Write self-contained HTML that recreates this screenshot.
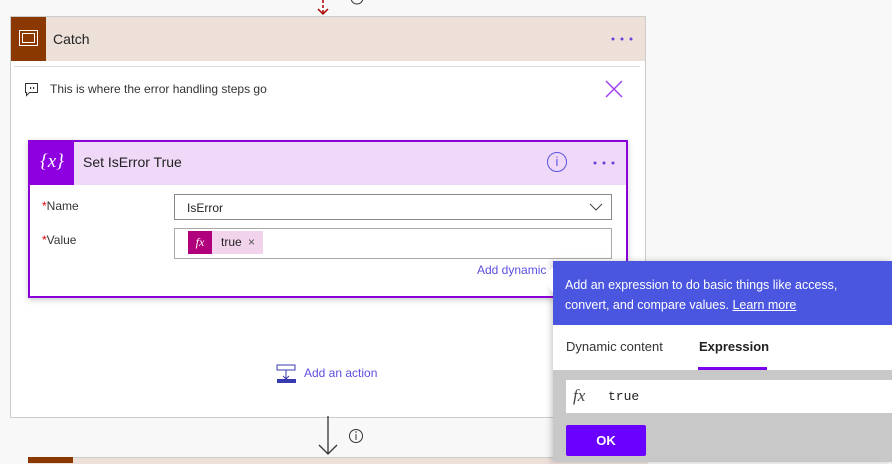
<!DOCTYPE html>
<html><head><style>
body{margin:0;width:892px;height:462px;background:#f8f8f8;font-family:"Segoe UI","Liberation Sans",sans-serif;position:relative;overflow:hidden;color:#222}
.a{position:absolute}
</style></head><body>
<svg class="a" style="left:313px;top:0" width="60" height="18"><line x1="10" y1="0" x2="10" y2="13" stroke="#a00" stroke-width="1.5" stroke-dasharray="3,2"/><polyline points="5,9 10,14 15,9" fill="none" stroke="#a00" stroke-width="1.5"/><circle cx="44" cy="-2" r="6" fill="none" stroke="#333"/></svg>
<div class="a" style="left:10px;top:16px;width:634px;height:400px;background:#fff;border:1px solid #ccc"></div>
<div class="a" style="left:11px;top:17px;width:634px;height:44px;background:#ede0d9"></div>
<div class="a" style="left:11px;top:17px;width:35px;height:44px;background:#8a3700"></div>
<div class="a" style="left:19px;top:30px;width:17px;height:14px;border:1px solid #fff"></div>
<div class="a" style="left:22px;top:33px;width:11px;height:8px;border:1px solid #fff"></div>
<div class="a" style="left:53px;top:31px;font-size:14px;color:#222">Catch</div>
<svg class="a" style="left:610px;top:36px" width="24" height="6"><circle cx="3" cy="3" r="1.5" fill="#6b3fd8"/><circle cx="12" cy="3" r="1.5" fill="#6b3fd8"/><circle cx="21" cy="3" r="1.5" fill="#6b3fd8"/></svg>
<div class="a" style="left:14px;top:66px;width:626px;height:1px;background:#ddd"></div>
<svg class="a" style="left:24px;top:82px" width="16" height="16"><path d="M1.5 1.5h12v9h-8l-3 3v-3h-1z" fill="none" stroke="#333"/><rect x="6" y="5" width="1.2" height="2" fill="#333"/><rect x="9" y="5" width="1.2" height="2" fill="#333"/></svg>
<div class="a" style="left:50px;top:82px;font-size:12px;color:#333">This is where the error handling steps go</div>
<svg class="a" style="left:605px;top:80px" width="18" height="18"><path d="M1 1L17 17M17 1L1 17" stroke="#a040f0" stroke-width="1.5"/></svg>
<div class="a" style="left:28px;top:140px;width:596px;height:154px;background:#fff;border:2px solid #8c00d8;box-shadow:0 2px 6px rgba(0,0,0,.2)"></div>
<div class="a" style="left:30px;top:142px;width:596px;height:43px;background:#efd8f8"></div>
<div class="a" style="left:30px;top:142px;width:44px;height:43px;background:#8f00e0;color:#fff;font-size:19px;text-align:center;line-height:40px;font-family:'Liberation Serif',serif"><i>{x}</i></div>
<div class="a" style="left:83px;top:154px;font-size:14px">Set IsError True</div>
<div class="a" style="left:547px;top:152px;width:18px;height:18px;border:1.5px solid #5a55e0;border-radius:50%;color:#5a55e0;font-size:13px;text-align:center;line-height:18px">i</div>
<svg class="a" style="left:592px;top:160px" width="24" height="6"><circle cx="3" cy="3" r="1.5" fill="#6b3fd8"/><circle cx="12" cy="3" r="1.5" fill="#6b3fd8"/><circle cx="21" cy="3" r="1.5" fill="#6b3fd8"/></svg>
<div class="a" style="left:42px;top:199px;font-size:12px;color:#333"><span style="color:#d00">*</span>Name</div>
<div class="a" style="left:42px;top:233px;font-size:12px;color:#333"><span style="color:#d00">*</span>Value</div>
<div class="a" style="left:174px;top:194px;width:436px;height:24px;border:1px solid #888;background:#fff"></div>
<div class="a" style="left:187px;top:201px;font-size:12px">IsError</div>
<svg class="a" style="left:589px;top:202px" width="14" height="10"><polyline points="1,2 7,8 13,2" fill="none" stroke="#444"/></svg>
<div class="a" style="left:174px;top:228px;width:436px;height:29px;border:1px solid #aaa;background:#fff"></div>
<div class="a" style="left:188px;top:231px;width:75px;height:23px;background:#f1d4ec"></div>
<div class="a" style="left:188px;top:231px;width:24px;height:23px;background:#b0007b;color:#fff;font-family:'Liberation Serif',serif;font-style:italic;font-size:12px;text-align:center;line-height:22px">fx</div>
<div class="a" style="left:221px;top:235px;font-size:12px">true <span style="color:#555;margin-left:3px">×</span></div>
<div class="a" style="left:477px;top:263px;font-size:12px;color:#5b4fe0">Add dynamic</div>
<svg class="a" style="left:276px;top:364px" width="22" height="20"><rect x="1" y="1" width="18" height="5" fill="none" stroke="#3a3ab0"/><line x1="10" y1="6" x2="10" y2="15" stroke="#3a3ab0"/><polyline points="7,12 10,15 13,12" fill="none" stroke="#3a3ab0"/><rect x="1" y="15" width="19" height="4" fill="#3a3ab0"/></svg>
<div class="a" style="left:304px;top:366px;font-size:12px;color:#5b4fe0">Add an action</div>
<svg class="a" style="left:316px;top:416px" width="60" height="42"><line x1="12" y1="0" x2="12" y2="38" stroke="#333" stroke-width="1.3"/><polyline points="3,29 12,38 21,29" fill="none" stroke="#333" stroke-width="1.3"/><circle cx="40" cy="20" r="6.5" fill="none" stroke="#333"/><line x1="40" y1="18" x2="40" y2="24" stroke="#333"/><circle cx="40" cy="16" r=".8" fill="#333"/></svg>
<div class="a" style="left:28px;top:457px;width:620px;height:6px;background:#ede0d9;border-top:1px solid #ccc"></div>
<div class="a" style="left:28px;top:457px;width:45px;height:6px;background:#8a3700"></div>
<div class="a" style="left:553px;top:261px;width:339px;height:201px;background:#fff;box-shadow:-2px 0 6px rgba(0,0,0,.2)"></div>
<svg class="a" style="left:540px;top:266px" width="16" height="30"><polygon points="14,0 14,28 2,12" fill="#fff"/></svg>
<div class="a" style="left:553px;top:261px;width:339px;height:64px;background:#4a55e0"></div>
<div class="a" style="left:565px;top:275px;font-size:12.5px;color:#fff;line-height:20px;width:320px">Add an expression to do basic things like access, convert, and compare values. <u>Learn more</u></div>
<div class="a" style="left:566px;top:339px;font-size:13px;color:#333">Dynamic content</div>
<div class="a" style="left:699px;top:339px;font-size:13px;color:#222;font-weight:600">Expression</div>
<div class="a" style="left:698px;top:367px;width:69px;height:3px;background:#7a00f0"></div>
<div class="a" style="left:553px;top:370px;width:339px;height:92px;background:#c8c8c8"></div>
<div class="a" style="left:566px;top:380px;width:326px;height:33px;background:#fff"></div>
<div class="a" style="left:573px;top:386px;font-family:'Liberation Serif',serif;font-style:italic;font-size:17px;color:#444">fx</div>
<div class="a" style="left:608px;top:389px;font-family:'Liberation Mono',monospace;font-size:13px;color:#222">true</div>
<div class="a" style="left:566px;top:425px;width:80px;height:31px;background:#6a00ff;color:#fff;font-weight:bold;font-size:13px;text-align:center;line-height:31px;border-radius:2px">OK</div>
</body></html>
